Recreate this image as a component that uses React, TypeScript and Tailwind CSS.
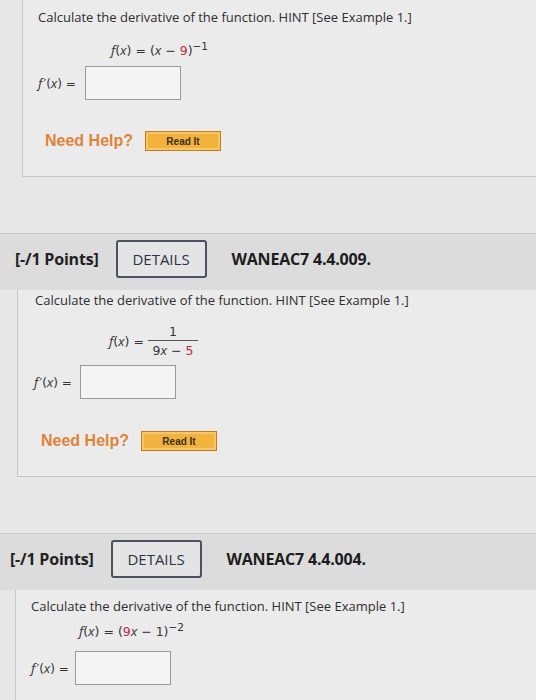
import React from "react";

const sans = "font-['Open_Sans','DejaVu_Sans',sans-serif]";
const math = "font-['DejaVu_Sans','Open_Sans',sans-serif]";

function Red({ children }: { children: React.ReactNode }) {
  return <span className="text-[#c8283c]">{children}</span>;
}

// variable letters: DejaVu has no oblique here, so borrow Open Sans italic
function V({ children }: { children: React.ReactNode }) {
  return <i className="font-['Open_Sans',sans-serif] text-[13.5px] italic">{children}</i>;
}

function AnswerRow({ labelPad, boxLeft }: { labelPad: string; boxLeft: string }) {
  return (
    <div className={`flex items-center ${labelPad}`}>
      <span className={`${boxLeft} ${math} shrink-0 text-[12px] text-[#333]`}>
        <V>f</V>&#8202;&#8242;(<V>x</V>) =
      </span>
      <div className="h-[34px] w-[96px] border border-[#9a9a9a] bg-[#f4f4f4]" />
    </div>
  );
}

function NeedHelp({ pad }: { pad: string }) {
  return (
    <div className={`flex items-center gap-[12px] ${pad}`}>
      <span className="font-['Liberation_Sans',Arial,sans-serif] text-[16px] font-bold text-[#e0823a]">
        Need Help?
      </span>
      <button className="flex h-[20px] w-[76px] items-center justify-center border border-[#c77a1e] bg-[#f1b23e] shadow-[inset_0_0_0_2px_#f6c766] font-['Liberation_Sans',Arial,sans-serif] text-[10px] font-bold text-[#3a3020]">
        Read It
      </button>
    </div>
  );
}

function Header({ pad, code, detailsLeft }: { pad: string; code: string; detailsLeft: string }) {
  return (
    <div className={`flex h-[57px] items-center border-t border-[#c9c9c9] bg-[#dcdcdc] pb-[6px] ${pad} ${sans}`}>
      <span className="text-[16px] font-bold tracking-[-0.2px] text-[#222]">[-/1 Points]</span>
      <div
        className={`${detailsLeft} flex h-[38px] w-[91px] items-center justify-center rounded-[3px] border-2 border-[#4a5160] bg-[#e4e4e4] text-[15px] text-[#2a3444]`}
      >
        DETAILS
      </div>
      <span className="ml-[25px] text-[16px] font-bold tracking-[-0.2px] text-[#1d1d1d]">{code}</span>
    </div>
  );
}

export default function App() {
  return (
    <div className={`h-[700px] w-[536px] overflow-hidden bg-[#e7e7e7] ${sans}`}>
      {/* problem 1 (cut off at top) */}
      <div className="ml-[22px] h-[177px] border-b border-l border-[#c6c6c6] bg-[#ebebeb] pt-[8px]">
        <p className="pl-[15px] text-[13px] leading-[18px] text-[#2e2e2e]">
          Calculate the derivative of the function. HINT [See Example 1.]
        </p>
        <div className={`mt-[15px] pl-[88px] ${math} text-[12.5px] leading-[18px] text-[#333]`}>
          <V>f</V>(<V>x</V>) = (<V>x</V> &minus; <Red>9</Red>)
          <sup className="text-[10.5px]">&minus;1</sup>
        </div>
        <div className="mt-[6px]">
          <AnswerRow labelPad="pl-[15px]" boxLeft="w-[47px]" />
        </div>
        <div className="mt-[29px]">
          <NeedHelp pad="pl-[22px]" />
        </div>
      </div>

      <div className="h-[56px]" />
      <Header pad="pl-[15px]" code="WANEAC7 4.4.009." detailsLeft="ml-[17px]" />

      {/* problem 2 */}
      <div className="ml-[17px] h-[187px] border-b border-l border-[#c6c6c6] bg-[#ebebeb] pt-[1px]">
        <p className="pl-[17px] text-[13px] leading-[18px] text-[#2e2e2e]">
          Calculate the derivative of the function. HINT [See Example 1.]
        </p>
        <div className={`mt-[14px] flex items-center pl-[91px] ${math} text-[12.5px] text-[#333]`}>
          <span>
            <V>f</V>(<V>x</V>) =
          </span>
          <span className="ml-[4px] inline-flex flex-col items-center">
            <span className="px-[2px] leading-[17px]">1</span>
            <span className="h-px w-[50px] bg-[#555]" />
            <span className="px-[2px] leading-[19px]">
              9<V>x</V> &minus; <Red>5</Red>
            </span>
          </span>
        </div>
        <div className="mt-[5px]">
          <AnswerRow labelPad="pl-[16px]" boxLeft="w-[46px]" />
        </div>
        <div className="mt-[30px]">
          <NeedHelp pad="pl-[23px]" />
        </div>
      </div>

      <div className="h-[56px]" />
      <Header pad="pl-[10px]" code="WANEAC7 4.4.004." detailsLeft="ml-[17px]" />

      {/* problem 3 */}
      <div className="ml-[15px] h-[200px] border-l border-[#c6c6c6] bg-[#ebebeb] pt-[7px]">
        <p className="pl-[15px] text-[13px] leading-[18px] text-[#2e2e2e]">
          Calculate the derivative of the function. HINT [See Example 1.]
        </p>
        <div className={`mt-[7px] pl-[63px] ${math} text-[12.5px] leading-[18px] text-[#333]`}>
          <V>f</V>(<V>x</V>) = (<Red>9</Red>
          <V>x</V> &minus; 1)<sup className="text-[10.5px]">&minus;2</sup>
        </div>
        <div className="mt-[10px]">
          <AnswerRow labelPad="pl-[15px]" boxLeft="w-[44px]" />
        </div>
      </div>
    </div>
  );
}
